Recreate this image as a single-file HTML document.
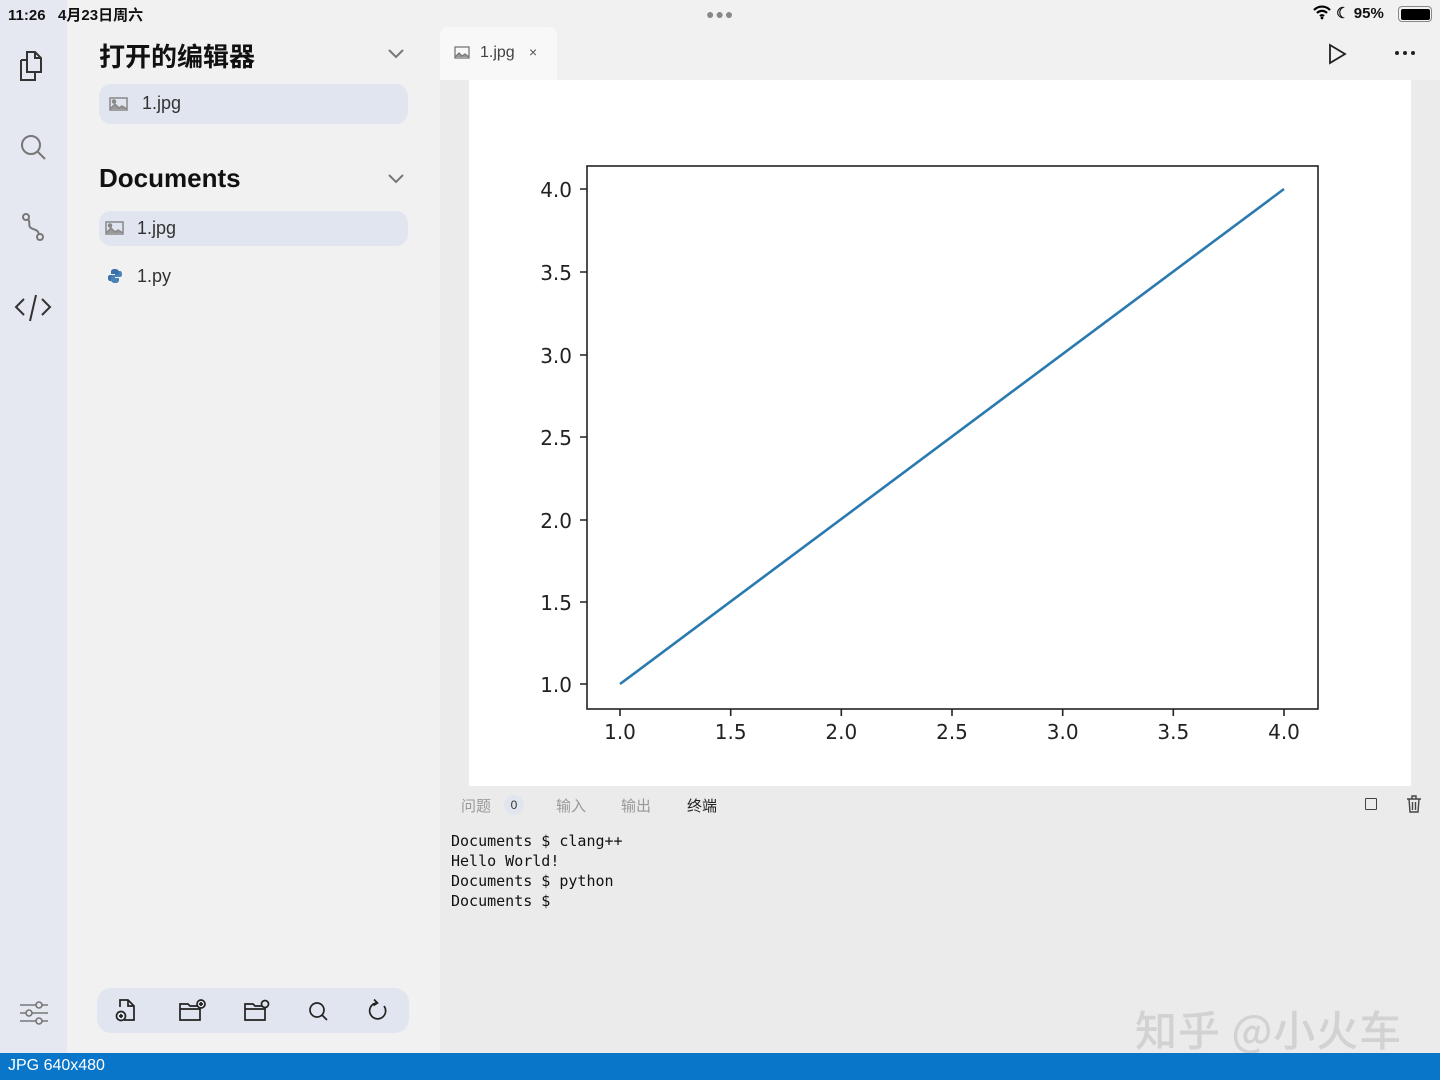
<!DOCTYPE html>
<html><head><meta charset="utf-8"><style>
*{margin:0;padding:0;box-sizing:border-box}
body{width:1440px;height:1080px;overflow:hidden;background:#f1f1f1;font-family:"Liberation Sans","Noto Sans CJK SC",sans-serif;position:relative;color:#111}
.abs{position:absolute}
.strip{left:0;top:0;width:67px;height:1053px;background:#e5e8f1}
.side{left:67px;top:0;width:373px;height:1053px;background:#f1f1f1}
.ed{left:440px;top:80px;width:1000px;height:973px;background:#ebebeb}
.row{position:absolute;left:99px;width:309px;background:#e1e5ef;border-radius:12px}
.h{position:absolute;left:99px;font-weight:bold;font-size:26px}
.chev{position:absolute;left:388px;width:16px;height:10px}
.term{left:451px;top:831px;font-family:"DejaVu Sans Mono","Liberation Mono",monospace;font-size:15px;line-height:20px;white-space:pre;color:#111}
.tb{top:795px;font-size:15px;color:#999;font-family:"Noto Sans CJK SC",sans-serif}
</style></head><body>
<div class="abs strip"></div>
<div class="abs side"></div>
<div class="abs ed"></div>
<div class="abs" style="left:8px;top:4px;font-size:15px;font-weight:bold;font-family:'Liberation Sans','Noto Sans CJK SC',sans-serif">11:26&nbsp;&nbsp;&nbsp;4月23日周六</div>
<div class="abs" style="left:706px;top:6px;font-size:14px;color:#888;letter-spacing:1px">●●●</div>
<div class="abs" style="left:1312px;top:4px;font-size:15px;font-weight:bold">
<svg width="20" height="16" viewBox="0 0 20 16" style="vertical-align:-2px"><path d="M2 6a11 11 0 0 1 16 0M5 9a7 7 0 0 1 10 0M8 12a3 3 0 0 1 4 0" stroke="#000" stroke-width="2.2" fill="none"/><circle cx="10" cy="14" r="1.4"/></svg> ☾ 95%</div>
<div class="abs" style="left:1398px;top:6px;width:34px;height:16px;border:1.5px solid #888;border-radius:4px;padding:1.5px"><div style="width:100%;height:100%;background:#000;border-radius:2px"></div></div>

<!-- activity bar icons -->
<svg class="abs" style="left:17px;top:48px" width="32" height="36" viewBox="0 0 32 36" fill="none" stroke="#333" stroke-width="2"><path d="M10 4h8l6 6v14H10z"/><path d="M18 4v6h6"/><path d="M4 12h6M4 12v20h14v-8"/></svg>
<svg class="abs" style="left:19px;top:133px" width="30" height="30" fill="none" stroke="#777" stroke-width="2"><circle cx="12" cy="12" r="9"/><path d="M19 19l7 7"/></svg>
<svg class="abs" style="left:20px;top:212px" width="28" height="30" fill="none" stroke="#777" stroke-width="2"><circle cx="6" cy="5" r="3"/><circle cx="20" cy="25" r="3"/><path d="M8 7.5c3 2 -1 7 4 9s6 2 7 6"/></svg>
<svg class="abs" style="left:14px;top:292px" width="38" height="30" fill="none" stroke="#333" stroke-width="2"><path d="M10 7l-8 8 8 8M28 7l8 8-8 8M22 3l-6 26"/></svg>
<svg class="abs" style="left:19px;top:1000px" width="30" height="28" fill="none" stroke="#777" stroke-width="1.6"><path d="M1 5h28M1 13h28M1 21h28"/><circle cx="20" cy="5" r="3" fill="#e5e8f1"/><circle cx="10" cy="13" r="3" fill="#e5e8f1"/><circle cx="20" cy="21" r="3" fill="#e5e8f1"/></svg>

<!-- sidebar -->
<div class="h" style="top:37px;font-family:'Noto Sans CJK SC',sans-serif">打开的编辑器</div>
<svg class="chev" style="top:49px" viewBox="0 0 16 10" fill="none" stroke="#777" stroke-width="2"><path d="M1 1l7 7 7-7"/></svg>
<div class="row" style="top:84px;height:40px"></div>
<svg class="abs" style="left:109px;top:97px" width="19" height="14" fill="none" stroke="#888" stroke-width="1.5"><rect x="1" y="1" width="17" height="12"/><path d="M1 12l5-5 4 4 3-2 5 3" fill="#999"/><circle cx="5" cy="4.5" r="1.5" fill="#888"/></svg>
<div class="abs" style="left:142px;top:93px;font-size:18px;color:#333">1.jpg</div>
<div class="h" style="top:163px">Documents</div>
<svg class="chev" style="top:174px" viewBox="0 0 16 10" fill="none" stroke="#777" stroke-width="2"><path d="M1 1l7 7 7-7"/></svg>
<div class="row" style="top:211px;height:35px"></div>
<svg class="abs" style="left:105px;top:221px" width="19" height="14" fill="none" stroke="#888" stroke-width="1.5"><rect x="1" y="1" width="17" height="12"/><path d="M1 12l5-5 4 4 3-2 5 3" fill="#999"/><circle cx="5" cy="4.5" r="1.5" fill="#888"/></svg>
<div class="abs" style="left:137px;top:218px;font-size:18px;color:#333">1.jpg</div>
<svg class="abs" style="left:107px;top:268px" width="16" height="16"><path d="M8 1c-3 0-4 1-4 3v2h4v1H3C1 7 1 9 1 10c0 2 1 3 2 3h1v-2c0-1 1-2 3-2h3c1 0 2-1 2-2V4c0-2-2-3-4-3z" fill="#3a70a8"/><path d="M8 15c3 0 4-1 4-3v-2H8V9h5c2 0 2-2 2-3 0-2-1-3-2-3h-1v2c0 1-1 2-3 2H6c-1 0-2 1-2 2v3c0 2 2 3 4 3z" fill="#4a83b8"/></svg>
<div class="abs" style="left:137px;top:266px;font-size:18px;color:#333">1.py</div>

<div class="abs" style="left:97px;top:988px;width:312px;height:45px;background:#e1e5ef;border-radius:14px"></div>
<svg class="abs" style="left:114px;top:998px" width="280" height="26" fill="none" stroke="#222" stroke-width="1.7">
<path d="M6 9V2h8l6 6v14H10"/><path d="M14 2v6h6"/><circle cx="7" cy="18" r="4.5"/><path d="M7 16v4M5 18h4"/>
<path d="M66 6h8l2 2h10v14H66z M66 11h20"/><circle cx="87" cy="6" r="4" fill="#e1e5ef"/><path d="M87 4v4M85 6h4"/>
<path d="M131 6h8l2 2h10v14h-20z M131 11h20"/><circle cx="151" cy="6" r="3.5" fill="#e1e5ef"/>
<circle cx="203" cy="12" r="7"/><path d="M208 17l5 5"/>
<path d="M270 8 A8 8 0 1 1 262 5"/><path d="M260 1.5l3.5 3.5-4 2.5"/>
</svg>

<!-- tab bar -->
<div class="abs" style="left:440px;top:27px;width:117px;height:53px;background:#f8f8f8;border-radius:8px 8px 0 0"></div>
<svg class="abs" style="left:454px;top:46px" width="16" height="13" fill="none" stroke="#777" stroke-width="1.3"><rect x="1" y="1" width="14" height="11"/><path d="M1 11l4-4 3 3 3-2 4 3" fill="#999"/></svg>
<div class="abs" style="left:480px;top:44px;font-size:16px;color:#444">1.jpg</div>
<div class="abs" style="left:529px;top:44px;font-size:14px;color:#555">×</div>
<svg class="abs" style="left:1327px;top:43px" width="20" height="22" fill="none" stroke="#222" stroke-width="1.8"><path d="M3 2l15 9-15 9z"/></svg>
<svg class="abs" style="left:1394px;top:50px" width="24" height="6"><circle cx="3" cy="3" r="2" fill="#222"/><circle cx="11" cy="3" r="2" fill="#222"/><circle cx="19" cy="3" r="2" fill="#222"/></svg>

<!-- plot -->
<div class="abs" style="left:469px;top:80px;width:942px;height:706px;background:#fff"></div>
<svg class="abs" style="left:0;top:0" width="1440" height="800" font-family="DejaVu Sans,sans-serif" font-size="20" fill="#222">
<rect x="587" y="166" width="731" height="543" fill="none" stroke="#222" stroke-width="1.6"/>
<g stroke="#222" stroke-width="1.6">
<path d="M580 189h7M580 272h7M580 355h7M580 437h7M580 520h7M580 602h7M580 684h7"/>
<path d="M620 709v7M730.7 709v7M841.3 709v7M952 709v7M1062.7 709v7M1173.3 709v7M1284 709v7"/>
</g>
<g text-anchor="end"><text x="572" y="197">4.0</text><text x="572" y="280">3.5</text><text x="572" y="363">3.0</text><text x="572" y="445">2.5</text><text x="572" y="528">2.0</text><text x="572" y="610">1.5</text><text x="572" y="692">1.0</text></g>
<g text-anchor="middle"><text x="620" y="739">1.0</text><text x="730.7" y="739">1.5</text><text x="841.3" y="739">2.0</text><text x="952" y="739">2.5</text><text x="1062.7" y="739">3.0</text><text x="1173.3" y="739">3.5</text><text x="1284" y="739">4.0</text></g>
<path d="M620 684L1284 189" stroke="#2a7ab0" stroke-width="2.6"/>
</svg>

<!-- panel -->
<div class="abs tb" style="left:461px">问题</div>
<div class="abs" style="left:504px;top:795px;width:20px;height:20px;border-radius:10px;background:#e1e5ef;font-size:12px;text-align:center;line-height:20px;color:#333">0</div>
<div class="abs tb" style="left:556px">输入</div>
<div class="abs tb" style="left:621px">输出</div>
<div class="abs tb" style="left:687px;color:#222">终端</div>
<div class="abs" style="left:1365px;top:798px;width:12px;height:12px;border:1.5px solid #444;border-radius:1px"></div>
<svg class="abs" style="left:1406px;top:795px" width="16" height="18" fill="none" stroke="#444" stroke-width="1.4"><path d="M1 4h14M6 4V1h4v3M3 4l1 13h8l1-13M6.5 7v8M9.5 7v8"/></svg>
<div class="abs term">Documents $ clang++
Hello World!
Documents $ python
Documents $</div>

<div class="abs" style="left:1135px;top:998px;font-size:42px;color:#d2d2d2;font-family:'Noto Sans CJK SC',sans-serif;font-weight:500;letter-spacing:1px">知乎 @小火车</div>

<div class="abs" style="left:0;top:1053px;width:1440px;height:27px;background:#0a76c9"></div>
<div class="abs" style="left:8px;top:1057px;font-size:16px;color:#fff">JPG 640x480</div>
</body></html>
